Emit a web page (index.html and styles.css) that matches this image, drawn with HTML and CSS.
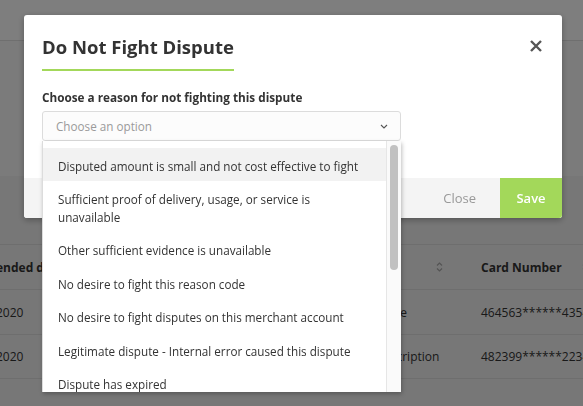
FILE: index.html
```html
<!DOCTYPE html>
<html lang="en">
<head>
<meta charset="utf-8">
<title>Do Not Fight Dispute</title>
<link rel="stylesheet" href="styles.css">
</head>
<body>
<div class="page">
  <header class="topbar"></header>
  <section class="filters"></section>
  <main class="content">
    <div class="table">
      <div class="row head">
        <div class="cell c1">ended date</div>
        <div class="cell c2"><span>Reason</span>
          <svg class="sort" width="7" height="12" viewBox="0 0 7 12"><path d="M1 4.5 L3.5 2 L6 4.5 M1 7.5 L3.5 10 L6 7.5" fill="none" stroke="#a8a8a8" stroke-width="1.2"/></svg>
        </div>
        <div class="cell c3"><span>Card Number</span>
          <svg class="sort" width="7" height="12" viewBox="0 0 7 12"><path d="M1 4.5 L3.5 2 L6 4.5 M1 7.5 L3.5 10 L6 7.5" fill="none" stroke="#a8a8a8" stroke-width="1.2"/></svg>
        </div>
      </div>
      <div class="row">
        <div class="cell c1">2020</div>
        <div class="cell c2">Duplicate charge</div>
        <div class="cell c3">464563******4354</div>
      </div>
      <div class="row">
        <div class="cell c1">2020</div>
        <div class="cell c2">Cancelled subscription</div>
        <div class="cell c3">482399******2234</div>
      </div>
    </div>
  </main>
</div>

<div class="overlay">
  <div class="modal">
    <div class="modal-body">
      <div class="modal-head">
        <h2 class="title">Do Not Fight Dispute</h2>
        <button class="close" aria-label="Close">
          <svg width="12" height="12" viewBox="0 0 12 12"><path d="M1 1 L11 11 M11 1 L1 11" stroke="#555" stroke-width="2.4" fill="none"/></svg>
        </button>
      </div>
      <label class="label">Choose a reason for not fighting this dispute</label>
      <div class="select">
        <div class="select-box">
          <span class="placeholder">Choose an option</span>
          <svg class="chevron" width="8" height="5" viewBox="0 0 8 5"><path d="M1 1 L4 4 L7 1" fill="none" stroke="#555" stroke-width="1.1"/></svg>
        </div>
        <div class="dropdown">
          <ul class="options">
            <li class="option active">Disputed amount is small and not cost effective to fight</li>
            <li class="option">Sufficient proof of delivery, usage, or service is unavailable</li>
            <li class="option">Other sufficient evidence is unavailable</li>
            <li class="option">No desire to fight this reason code</li>
            <li class="option">No desire to fight disputes on this merchant account</li>
            <li class="option">Legitimate dispute - Internal error caused this dispute</li>
            <li class="option">Dispute has expired</li>
          </ul>
          <div class="scrollbar"><div class="thumb"></div></div>
        </div>
      </div>
    </div>
    <div class="modal-foot">
      <button class="btn btn-close">Close</button>
      <button class="btn btn-save">Save</button>
    </div>
  </div>
</div>
</body>
</html>
```

FILE: styles.css
```css
* { box-sizing: border-box; }

html, body {
  margin: 0;
  padding: 0;
}

body {
  width: 583px;
  height: 406px;
  overflow: hidden;
  background: #eeeeee;
  font-family: "Open Sans", "Liberation Sans", sans-serif;
  color: #333;
}

.page {
  width: 583px;
  overflow: hidden;
}

.topbar {
  height: 41px;
  background: #fcfcfc;
  border-bottom: 1px solid #dedede;
}

.filters {
  height: 135px;
  background: #f6f6f6;
}

.content {
  padding-top: 68px;
}

.table {
  width: 720px;
}

.row {
  display: grid;
  grid-template-columns: 293px 168px 259px;
  height: 45px;
  border-top: 1px solid #dcdcdc;
  align-items: center;
  font-size: 12px;
}

.row:last-child {
  border-bottom: 1px solid #dcdcdc;
}

.head {
  font-weight: 700;
}

.cell {
  display: flex;
  align-items: center;
  padding-left: 20px;
  white-space: nowrap;
}

.c1 {
  padding-left: 0;
  margin-left: -4px;
}

.c2 {
  justify-content: space-between;
  padding-right: 18px;
}

.c3 {
  gap: 20px;
}

.sort {
  display: block;
}

/* overlay + modal */
.overlay {
  position: fixed;
  inset: 0;
  background: rgba(0, 0, 0, 0.5);
  padding: 15px 0 0 24px;
}

.modal {
  width: 538px;
  background: #fff;
  border-radius: 3px;
  box-shadow: 0 2px 6px rgba(0, 0, 0, 0.3);
}

.modal-body {
  padding: 18px 18px 37px;
}

.modal-head {
  display: flex;
  justify-content: space-between;
  align-items: flex-start;
}

.title {
  margin: 0;
  font-size: 18.5px;
  line-height: 28px;
  font-weight: 700;
  color: #333;
  padding-bottom: 8px;
  border-bottom: 2px solid #a3d85a;
}

.close {
  border: 0;
  background: none;
  padding: 0;
  margin: 7px 2px 0 0;
  display: flex;
  cursor: pointer;
}

.label {
  display: block;
  margin-top: 17px;
  font-size: 11.75px;
  line-height: 18px;
  font-weight: 700;
  color: #333;
}

.select {
  position: relative;
  margin-top: 5px;
  width: 359px;
}

.select-box {
  height: 30px;
  border: 1px solid #dcdcdc;
  border-radius: 3px;
  background: #fcfcfc;
  display: flex;
  align-items: center;
  justify-content: space-between;
  padding: 0 12px 0 13px;
}

.placeholder {
  font-size: 11.7px;
  color: #9a9a9a;
}

.chevron {
  display: block;
}

.dropdown {
  position: absolute;
  top: 30px;
  left: 0;
  width: 359px;
  height: 251px;
  background: #fff;
  border-left: 1px solid #dcdcdc;
  box-shadow: 1px 2px 4px rgba(0, 0, 0, 0.25);
  display: flex;
  z-index: 2;
}

.options {
  list-style: none;
  margin: 0;
  padding: 7px 0 0;
  flex: 1;
  overflow: hidden;
}

.option {
  padding: 8.6px 16px 6.8px 15px;
  font-size: 11.7px;
  line-height: 18px;
  color: #333;
}

.option.active {
  background: #f2f2f2;
}

.scrollbar {
  width: 15px;
  border-left: 1px solid #e6e6e6;
  background: #fafafa;
  padding: 4px 3px 0 3px;
}

.thumb {
  height: 125px;
  background: #c1c1c1;
  border-radius: 4px;
}

.modal-foot {
  display: flex;
  justify-content: flex-end;
  height: 40px;
  background: #f4f4f4;
  border-radius: 0 0 3px 3px;
}

.btn {
  border: 0;
  font-family: "Open Sans", "Liberation Sans", sans-serif;
  font-size: 13px;
  cursor: pointer;
}

.btn-close {
  background: none;
  color: #999;
  padding: 0 24px;
}

.btn-save {
  width: 62px;
  background: #a3d85a;
  color: #fff;
  font-weight: 600;
  border-radius: 0 0 3px 0;
}
```
